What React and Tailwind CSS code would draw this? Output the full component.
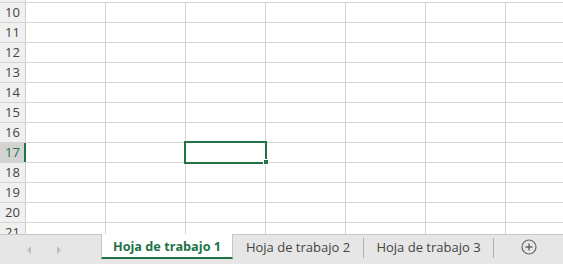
import React from "react";

const rows = [10, 11, 12, 13, 14, 15, 16, 17, 18, 19, 20, 21];
const cols = [0, 1, 2, 3, 4, 5, 6];

const App = () => {
  return (
    <div
      className="w-[563px] h-[264px] overflow-hidden flex flex-col bg-white"
      style={{ fontFamily: '"Open Sans", "Noto Sans", sans-serif' }}
    >
      {/* sheet grid */}
      <div className="relative h-[234px] overflow-hidden">
        <div className="flex h-[3px] border-b border-[#d4d4d4]">
          <div className="w-[26px] shrink-0 bg-[#f0f0f0] border-r border-[#cfcfcf]" />
        </div>
        {rows.map((r) => (
          <div key={r} className="flex h-[20px] border-b border-[#d4d4d4]">
            <div
              className={
                r === 17
                  ? "w-[26px] shrink-0 bg-[#d3d3d3] border-r-2 border-[#217346] flex items-center justify-center text-[13px] text-[#217346] pl-[1px]"
                  : "w-[26px] shrink-0 bg-[#f0f0f0] border-r border-[#cfcfcf] flex items-center justify-center text-[13px] text-[#444]"
              }
            >
              {r}
            </div>
            {cols.map((c) => (
              <div key={c} className="w-[80px] shrink-0 border-r border-[#d4d4d4]" />
            ))}
          </div>
        ))}

        {/* active cell */}
        <div className="absolute left-[184px] top-[141px] w-[83px] h-[23px] border-2 border-[#217346]" />
        <div className="absolute left-[263px] top-[159px] w-[6px] h-[6px] bg-[#217346] border border-white" />
      </div>

      {/* sheet tabs */}
      <div className="relative flex h-[30px] bg-[#e6e6e6] text-[13px]">
        <div className="absolute left-0 right-0 top-0 h-px bg-[#c6c6c6]" />
        <div className="w-[101px] shrink-0 flex items-center pt-[1px]">
          <span className="ml-[27px] w-0 h-0 border-y-[4px] border-y-transparent border-r-[4px] border-r-[#bdbdbd]" />
          <span className="ml-[26px] w-0 h-0 border-y-[4px] border-y-transparent border-l-[4px] border-l-[#bdbdbd]" />
        </div>
        <div className="relative z-10 w-[132px] h-[25px] shrink-0 bg-white border-x border-[#c6c6c6] border-b-[2px] border-b-[#217346] flex items-center justify-center font-bold text-[#217346] pt-[3px] text-[12.7px]">
          Hoja de trabajo 1
        </div>
        <div className="w-[130px] shrink-0 flex items-center justify-center text-[#444] pb-[2px]">
          Hoja de trabajo 2
        </div>
        <div className="w-px h-[20px] mt-[4px] bg-[#b0b0b0]" />
        <div className="w-[129px] shrink-0 flex items-center justify-center text-[#444] pb-[2px]">
          Hoja de trabajo 3
        </div>
        <div className="w-px h-[20px] mt-[4px] bg-[#b0b0b0]" />
        <div className="flex-1 flex items-center justify-center pb-[4px]">
          <svg width="16" height="16" viewBox="0 0 16 16" fill="none" stroke="#666" strokeWidth="1.2">
            <circle cx="8" cy="8" r="7" />
            <path d="M8 4.5v7M4.5 8h7" strokeWidth="1.4" />
          </svg>
        </div>
      </div>
    </div>
  );
};

export default App;
